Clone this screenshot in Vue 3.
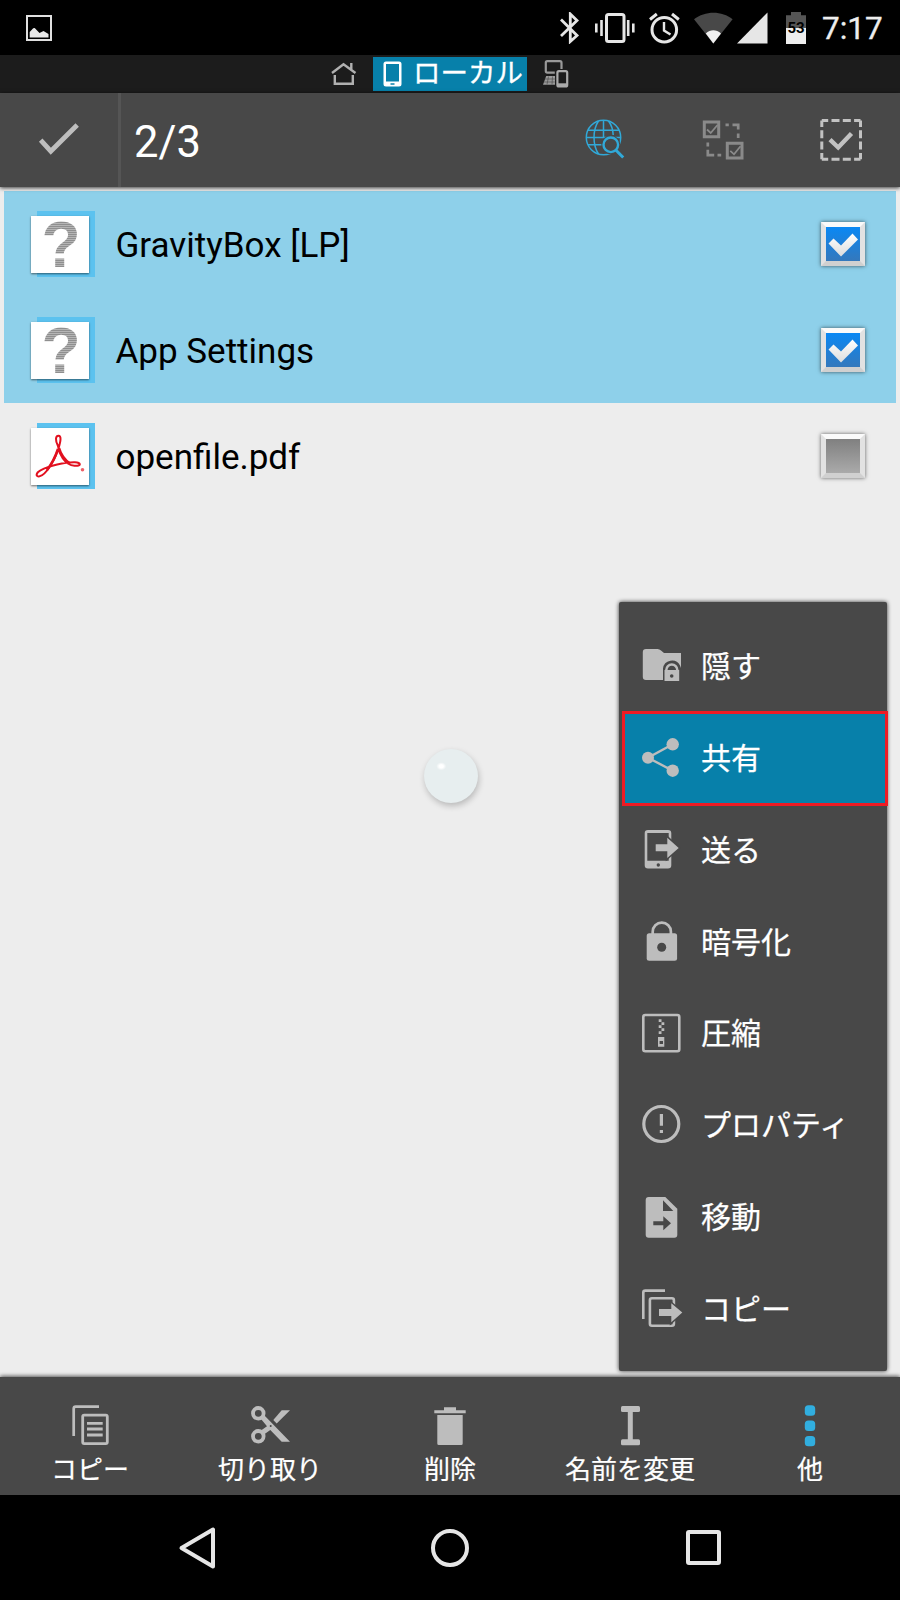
<template>
  <div class="screen">
    <header class="status-bar">
      <svg class="picture" width="26" height="26" viewBox="0 0 26 26">
        <rect x="1" y="1" width="24" height="24" fill="none" stroke="#e0e0e0" stroke-width="2" />
        <path d="M3.7 22.5V17l3.5-3.8 1.5-.3L13.5 18l4-2 5 3v3.5z" fill="#e8e8e8" />
      </svg>
      <div class="status-icons">
        <svg class="bluetooth" width="20" height="32" viewBox="0 0 20 32">
          <path d="M1 7.5 17 23.5 10.3 29.5V2L17 8.5 1 24" fill="none" stroke="#e6e6e6" stroke-width="2.8" />
        </svg>
        <svg class="vibrate" width="40" height="32" viewBox="0 0 40 32">
          <rect x="11.5" y="2.5" width="17.5" height="27" rx="2" fill="none" stroke="#e6e6e6" stroke-width="3" />
          <path d="M1.3 11.5v9M6.5 8v16M33.2 8v16M38.3 11.5v9" stroke="#e6e6e6" stroke-width="2.6" />
        </svg>
        <svg class="alarm" width="31" height="32" viewBox="0 0 31 32">
          <circle cx="15.3" cy="17.7" r="12.3" fill="none" stroke="#e6e6e6" stroke-width="3" />
          <path d="M15 10v8.5l6.5 4" fill="none" stroke="#e6e6e6" stroke-width="2.4" />
          <path d="M1 7.5 7.8 2M29.8 7.5 23 2" stroke="#e6e6e6" stroke-width="3" />
        </svg>
        <svg class="wifi" width="39" height="32" viewBox="0 0 39 32">
          <path d="M0 7.3C11-1.5 28-1.5 38.6 7.3L19.3 31.5z" fill="#484848" />
          <path d="M11.8 21.5c4.5-4.2 10.5-4.2 15.2 0L19.3 31.5z" fill="#f0f0f0" />
        </svg>
        <svg class="cell" width="31" height="32" viewBox="0 0 31 32">
          <path d="M0 31.5 30.5.5v31z" fill="#e6e6e6" />
        </svg>
        <div class="battery">
          <svg width="20" height="32" viewBox="0 0 20 32">
            <path d="M0 3.2h5V0h10v3.2h5V17H0z" fill="#555" />
            <path d="M0 16h20v16H0z" fill="#eee" />
          </svg>
          <span>53</span>
        </div>
        <time>7:17</time>
      </div>
    </header>

    <nav class="tabs">
      <svg class="home" width="26" height="24" viewBox="0 0 26 24">
        <path d="M1 11 12.5 2.3 24.5 11M20.3 1v6.5M3.8 13v8.8h18V13" fill="none" stroke="#b0b0b0" stroke-width="2.4" />
      </svg>
      <div class="tab-active">
        <svg width="19" height="26" viewBox="0 0 19 26">
          <path d="M3 .5h13a2.5 2.5 0 0 1 2.5 2.5v20a2.5 2.5 0 0 1-2.5 2.5H3A2.5 2.5 0 0 1 .5 23V3A2.5 2.5 0 0 1 3 .5zm0 2.500v17.500h13V3zM7.500 22.300v1.500h4v-1.500z" fill="#fff" fill-rule="evenodd" />
        </svg>
        <span>ローカル</span>
      </div>
      <svg class="network" width="26" height="28" viewBox="0 0 26 28">
        <path d="M18.5 9V2.7q0-1.5-1.5-1.5H4.3q-1.5 0-1.5 1.5V11q0 1.7 1.5 1.7h7.5" fill="none" stroke="#999" stroke-width="2.2" />
        <path d="M3.2 16H12v8.8H0z" fill="#999" />
        <path d="M1.5 19h11M.8 22h11M5.5 16.5 4 24.5M9.5 16.5 9 24.5" stroke="#444" stroke-width=".6" />
        <rect x="14.4" y="11.2" width="9.8" height="15.2" rx="1.5" fill="#1c1c1c" stroke="#aaa" stroke-width="2.2" />
        <path d="M14.4 24.8h10" stroke="#aaa" stroke-width="3" />
      </svg>
    </nav>

    <div class="toolbar">
      <div class="done">
        <svg width="42" height="34" viewBox="0 0 42 34">
          <path d="m2.7 19.2 10.1 11L39.2 4" fill="none" stroke="#bebebe" stroke-width="4.8" />
        </svg>
      </div>
      <div class="count">2/3</div>
      <div v-for="name in tools" :key="name" class="tool">
        <svg width="44" height="44" viewBox="0 0 44 44" v-html="icons[name]"></svg>
      </div>
    </div>

    <main class="content">
      <div v-for="file in files" :key="file.name" class="row" :class="{ selected: file.checked }">
        <div class="thumb">
          <div class="sheet">
            <span v-if="file.type === 'unknown'" class="question">?</span>
            <svg v-else width="58" height="57" viewBox="0 0 58 57">
              <path d="M27 18C24 12 24.5 8 27.5 7.8c3-.1 2.4 5-.2 13.5C23 33 15 47 8.500 48.300 4.500 49 4.500 45 9.500 42.300 18 38 34 34 44 34.300c6.500.2 6.500 4-.5 3.500C33 37 28 25 27 18z" fill="none" stroke="#e2101f" stroke-width="2" />
              <path d="M28 20c2 7 6 12 11 15.500M27 21c-3 9-7 16-11 21" fill="none" stroke="#e2101f" stroke-width="2.6" />
              <circle cx="51.500" cy="41.800" r="1.800" fill="#ed6068" />
            </svg>
          </div>
        </div>
        <span class="file-name">{{ file.name }}</span>
        <div class="checkbox" :class="{ checked: file.checked }" @click="file.checked = !file.checked">
          <svg v-if="file.checked" width="34" height="34" viewBox="0 0 34 34">
            <defs>
              <linearGradient id="tick" x1="0" y1="0" x2="0" y2="1">
                <stop offset="0" stop-color="#fff" />
                <stop offset="1" stop-color="#ddd" />
              </linearGradient>
            </defs>
            <path d="m2.500 16.500 5-5 7.500 7L26.500 6.500l5.500 6L15 29.500z" fill="url(#tick)" />
          </svg>
        </div>
      </div>

      <div class="bubble"></div>

      <ul class="menu">
        <li v-for="item in menu" :key="item.icon" :class="{ active: item.active }">
          <svg width="44" height="44" viewBox="0 0 44 44" v-html="icons[item.icon]"></svg>
          <span>{{ item.label }}</span>
        </li>
      </ul>
    </main>

    <footer class="actions">
      <div v-for="action in actions" :key="action.icon" class="action">
        <svg width="44" height="44" viewBox="0 0 44 44" v-html="icons[action.icon]"></svg>
        <span>{{ action.label }}</span>
      </div>
    </footer>

    <div class="nav-bar">
      <svg width="42" height="44" viewBox="0 0 42 44">
        <path d="M5.500 22 37 3.500v37z" fill="none" stroke="#e6e6e6" stroke-width="4" stroke-linejoin="round" />
      </svg>
      <svg width="42" height="44" viewBox="0 0 42 44">
        <circle cx="21" cy="22" r="17" fill="none" stroke="#e6e6e6" stroke-width="4" />
      </svg>
      <svg width="42" height="44" viewBox="0 0 42 44">
        <rect x="6" y="6" width="31" height="31" rx="1" fill="none" stroke="#e6e6e6" stroke-width="4" />
      </svg>
    </div>
  </div>
</template>

<script setup>
import {ref} from 'vue';

const files = ref([
  {name: 'GravityBox [LP]', type: 'unknown', checked: true},
  {name: 'App Settings', type: 'unknown', checked: true},
  {name: 'openfile.pdf', type: 'pdf', checked: false}
]);

const tools = ['search', 'range', 'selectAll'];

const menu = [
  {icon: 'hide', label: '隠す'},
  {icon: 'share', label: '共有', active: true},
  {icon: 'send', label: '送る'},
  {icon: 'encrypt', label: '暗号化'},
  {icon: 'compress', label: '圧縮'},
  {icon: 'properties', label: 'プロパティ'},
  {icon: 'move', label: '移動'},
  {icon: 'copyTo', label: 'コピー'}
];

const actions = [
  {icon: 'copy', label: 'コピー'},
  {icon: 'cut', label: '切り取り'},
  {icon: 'remove', label: '削除'},
  {icon: 'rename', label: '名前を変更'},
  {icon: 'more', label: '他'}
];

// all icons are drawn on a 44x44 grid
const icons = {
  search: `<g fill="none" stroke="#31a9d8" stroke-width="1.5">
    <circle cx="20.500" cy="19.500" r="17.200"/><path d="M20.500 2.300V19M5 12.200h31M3.300 19.500h34.500M5 26.800h16M15.500 3c-6 9-6 24 0 33M25.500 3c3 4 4.500 9 4.700 14"/></g>
    <circle cx="27.800" cy="26.800" r="9.500" fill="#484848"/>
    <path d="m33 32.200 7.200 7.300" stroke="#31a9d8" stroke-width="3"/><circle cx="27.800" cy="26.800" r="7.300" fill="none" stroke="#31a9d8" stroke-width="2.400"/>`,
  range: `<g fill="none" stroke="#8a8a8a"><path d="M3.300 4h14.400v14.700H3.300zM26.300 25.300H41V40H26.300z" stroke-width="3"/>
    <path d="m6 11.500 3.700 3.500L16.500 7M29.300 32.800 33 36.300l6.500-8" stroke-width="1.800"/>
    <path d="M24.500 6.800h3.300M31.500 6.800h5.700v4.700M37.200 15.500V20M6.800 24.500v4M6.800 31.800v5.400h6.400M16.500 37.200h3.700" stroke-width="2.700"/></g>`,
  selectAll: `<path d="M2.800 2.600h38.700v38.700H2.800z" fill="none" stroke="#c2c2c2" stroke-width="3" stroke-dasharray="6.400 3.300 8 3.300 8 3.300 6.400 0"/>
    <path d="m11 21.700 8.200 7.800 13.300-14" fill="none" stroke="#c2c2c2" stroke-width="4.400"/>`,
  hide: `<path d="M6 5h11.500q2 0 3.500 1.500L24 9h17v15l-1-2.500a9 9 0 0 0-17 3V36H6a3.200 3.200 0 0 1-3.200-3.200V8.200A3.200 3.200 0 0 1 6 5z"/>
    <path d="M24.500 26h14.700v11H24.500z"/><path d="M26.300 27v-1a5.500 5.500 0 0 1 11 0v1" fill="none" stroke="currentColor" stroke-width="2.500"/>
    <circle cx="31.700" cy="32" r="1.800" fill="#484848"/>`,
  share: `<path d="M32.700 8.300 8 21.700l24.700 13" fill="none" stroke="currentColor" stroke-width="2.400"/>
    <circle cx="8" cy="21.700" r="6"/><circle cx="32.700" cy="8.300" r="6.200"/><circle cx="32.700" cy="34.700" r="6.200"/>`,
  send: `<path d="M8 2h20a3.300 3.300 0 0 1 3.300 3.300v32a3.300 3.300 0 0 1-3.300 3.300H8a3.300 3.300 0 0 1-3.300-3.300v-32A3.300 3.300 0 0 1 8 2zm-.7 3v27.700h21.400V5z" fill-rule="evenodd"/>
    <circle cx="18.300" cy="37" r="1.700" fill="#484848"/>
    <path d="M27.300 9.700 38.500 20 27.300 30z" fill="#484848" stroke="#484848" stroke-width="3"/><path d="M15.700 16.300h11.600V9.700L38.700 20 27.300 30v-6.700H15.700z"/>`,
  encrypt: `<rect x="6.700" y="13.300" width="30.400" height="27.400" rx="2.500"/><path d="M12.700 14v-2.300a9 9 0 0 1 18.200 0V14" fill="none" stroke="currentColor" stroke-width="2.700"/>
    <circle cx="21.700" cy="27.300" r="4.500" fill="#484848"/>`,
  compress: `<rect x="3.300" y="4" width="36" height="36.300" rx="2" fill="none" stroke="currentColor" stroke-width="2.600"/>
    <path d="M18.700 8.300h2.800v2.800h-2.800zM21.500 11.300h2.800v2.800h-2.800zM18.700 14.300h2.800v2.800h-2.800zM21.500 17.300h2.800v2.800h-2.800zM18.700 20.200h2.800V23h-2.800z"/>
    <path d="M18 26h6.300v9.700H18zM19.600 30v3H23v-3z" fill-rule="evenodd"/>`,
  properties: `<circle cx="21.300" cy="21" r="17.500" fill="none" stroke="currentColor" stroke-width="3.200"/><path d="M19.800 11h3.200v11.700h-3.200zM19.800 27H23v3h-3.200z"/>`,
  move: `<path d="M8.700 2h16.600L37.300 13.700v26a3 3 0 0 1-3 3H8.700a3 3 0 0 1-3-3V5a3 3 0 0 1 3-3z"/>
    <path d="M23 5.300 33.300 16H23zM13.300 26.300h10v-5l7.700 7-7.700 7v-5h-10z" fill="#484848"/>`,
  copyTo: `<path d="M25 3.600H5.300q-2 0-2 2V32M9.900 13.300q0-2 2-2h20q2 0 2 2v23.500q0 2-2 2h-20q-2 0-2-2z" fill="none" stroke="currentColor" stroke-width="2.600"/>
    <path d="M31.300 16.300 42.300 25.600l-11 9.700z" fill="#484848" stroke="#484848" stroke-width="3"/><path d="M19 22h12.300v-5.700l11 9.300-11 9.700V29H19z"/>`,
  copy: `<path d="M31 2.700H7.700q-2 0-2 2V32" fill="none" stroke="currentColor" stroke-width="2.700"/>
    <rect x="14.700" y="11.100" width="24.600" height="28.500" rx="1.500" fill="none" stroke="currentColor" stroke-width="2.800"/>
    <path d="M19 19.300h15.700M19 25h15.700M19 31h15.700" stroke="currentColor" stroke-width="2.800"/>`,
  cut: `<g fill="none" stroke="currentColor" stroke-width="3.800"><circle cx="10.300" cy="9.300" r="5.300"/><circle cx="10.300" cy="32.300" r="5.300"/></g>
    <path d="m13 15 3.500-3.500L42 37.700h-8.300L22.300 26l-7.800 5.500-3-4L19 22.300z"/><path d="M42 6.300h-8.300L25.300 16l3.400 3.500z"/><circle cx="22.700" cy="22" r="1" fill="#484848"/>`,
  remove: `<path d="M6.300 6.300H16v-3h12v3h9.700v3H6.300zM9.300 11h25.400v28.500q0 1.500-1.500 1.500H10.800q-1.500 0-1.500-1.500z"/>`,
  rename: `<rect x="13" y="2" width="19" height="6" rx="1.500"/><rect x="13" y="35.300" width="19" height="6" rx="1.500"/><path d="M19.800 5h5v33h-5z"/>`,
  more: `<g fill="#31aedf"><rect x="16.800" y="1.300" width="10.400" height="10.400" rx="3.500"/><rect x="16.800" y="16.600" width="10.400" height="10.400" rx="3.500"/><rect x="16.800" y="31.900" width="10.400" height="10.400" rx="3.500"/></g>`
};
</script>

<style>
body {
  margin: 0;
}
</style>

<style scoped>
.screen {
  display: flex;
  flex-direction: column;
  width: 900px;
  height: 1600px;
  overflow: hidden;
  background: #ededed;
  font-family: Roboto, "Noto Sans CJK JP", sans-serif;
}

svg {
  display: block;
  flex: none;
}

.status-bar {
  display: flex;
  align-items: center;
  justify-content: space-between;
  flex: none;
  box-sizing: border-box;
  height: 55px;
  padding: 0 18px 0 26px;
  background: #000;
}

.status-icons {
  display: flex;
  align-items: center;
}

.vibrate {
  margin-left: 15px;
}

.alarm {
  margin-left: 14px;
}

.wifi {
  margin-left: 14px;
}

.cell {
  margin-left: 4px;
}

.battery {
  position: relative;
  margin-left: 18px;
}

.battery span {
  position: absolute;
  inset: 0;
  color: #000;
  font-size: 15px;
  font-weight: 700;
  line-height: 33px;
  text-align: center;
}

.status-bar time {
  width: 60px;
  margin-left: 16px;
  color: #eee;
  font-size: 31.5px;
  line-height: 53px;
  padding-top: 2px;
  -webkit-text-stroke: .3px;
}

.tabs {
  display: flex;
  align-items: center;
  flex: none;
  box-sizing: border-box;
  height: 38px;
  padding-left: 331px;
  background: #1c1c1c;
}

.tab-active {
  display: flex;
  align-items: center;
  box-sizing: border-box;
  width: 154px;
  height: 34px;
  margin: 0 16px;
  padding-left: 10px;
  background: #0780aa;
}

.tab-active span {
  margin-left: 11px;
  color: #fff;
  font-size: 27.5px;
  line-height: 34px;
  white-space: nowrap;
  -webkit-text-stroke: .3px;
}

.toolbar {
  position: relative;
  z-index: 1;
  display: flex;
  flex: none;
  box-sizing: border-box;
  height: 94px;
  padding-right: .5px;
  background: #484848;
  box-shadow: 0 1px 4px rgba(0, 0, 0, .75);
}

.done {
  display: flex;
  align-items: center;
  justify-content: center;
  box-sizing: border-box;
  width: 121px;
  padding-bottom: 4px;
  border-right: 3px solid #555;
}

.count {
  flex: 1;
  padding-left: 13px;
  color: #fff;
  font-size: 43.5px;
  line-height: 100px;
}

.tool {
  display: flex;
  align-items: center;
  justify-content: center;
  width: 118px;
}

.content {
  position: relative;
  flex: 1;
  padding: 4px 4px 0;
}

.row {
  display: flex;
  align-items: center;
  box-sizing: border-box;
  height: 106px;
  padding: 0 31px 0 26px;
}

.row.selected {
  background: #8ed0ea;
}

.thumb {
  box-sizing: border-box;
  width: 65px;
  height: 66px;
  padding-top: 5px;
  background: linear-gradient(#5cc2ef, #5cc2ef) 7px 0 / 58px 66px no-repeat;
}

.sheet {
  display: flex;
  align-items: center;
  justify-content: center;
  width: 58px;
  height: 57px;
  margin-left: 1px;
  background: #fff;
  box-shadow: 0 1px 2px rgba(0, 0, 0, .55);
}

.question {
  margin-left: 2px;
  color: transparent;
  background: repeating-linear-gradient(#8f8f8f 0 1px, #b5b5b5 1px 2px);
  background-clip: text;
  -webkit-background-clip: text;
  font-family: "Liberation Sans", Arial, sans-serif;
  font-size: 64px;
  font-weight: 700;
  line-height: normal;
}

.file-name {
  flex: 1;
  padding-top: 3px;
  margin-left: 20.5px;
  color: #000;
  font-size: 35px;
}

.checkbox {
  width: 34px;
  height: 34px;
  border: 5px solid;
  border-color: #fafafa #e2e2e2 #d0d0d0;
  background: linear-gradient(#808080, #aaa);
  box-shadow: 0 0 4px rgba(0, 0, 0, .6);
}

.checkbox.checked {
  background: linear-gradient(#0a88f4, #3478bc);
}

.bubble {
  position: absolute;
  top: 562px;
  left: 424px;
  width: 54px;
  height: 54px;
  border-radius: 50%;
  background: radial-gradient(ellipse 5px 4px at 32% 32%, #fff 40%, transparent), #e7eeef;
  box-shadow: 1px 3px 6px rgba(0, 0, 0, .22);
}

.menu {
  position: absolute;
  top: 415px;
  right: 13px;
  box-sizing: border-box;
  width: 268px;
  height: 769px;
  margin: 0;
  padding: 18.4px 0 0;
  border-radius: 2px;
  background: #484848;
  box-shadow: 0 0 4px rgba(0, 0, 0, .8);
  list-style: none;
}

.menu li {
  display: flex;
  align-items: center;
  height: 91.8px;
  padding-left: 21px;
  color: #fff;
  font-size: 30px;
}

.menu li span {
  padding-bottom: 4px;
  margin-left: 17px;
  -webkit-text-stroke: .25px;
}

.menu svg,
.actions svg {
  color: #bdbdbd;
  fill: currentColor;
}

.menu li.active {
  position: relative;
  box-sizing: border-box;
  height: 95px;
  margin: -1.6px -1px -1.6px 3px;
  padding-left: 15px;
  border: 3px solid #ee1b24;
  background: #0780aa;
}

.actions {
  position: relative;
  display: grid;
  grid-template-columns: repeat(5, 1fr);
  flex: none;
  height: 118px;
  background: #484848;
  box-shadow: 0 -1px 4px rgba(0, 0, 0, .65);
}

.action {
  display: flex;
  flex-direction: column;
  align-items: center;
  padding-top: 27px;
  color: #fff;
  font-size: 26px;
  line-height: 44px;
  -webkit-text-stroke: .2px;
}

.nav-bar {
  position: relative;
  display: flex;
  align-items: center;
  justify-content: space-between;
  flex: none;
  box-sizing: border-box;
  height: 105px;
  padding: 0 176px;
  background: #000;
}
</style>
